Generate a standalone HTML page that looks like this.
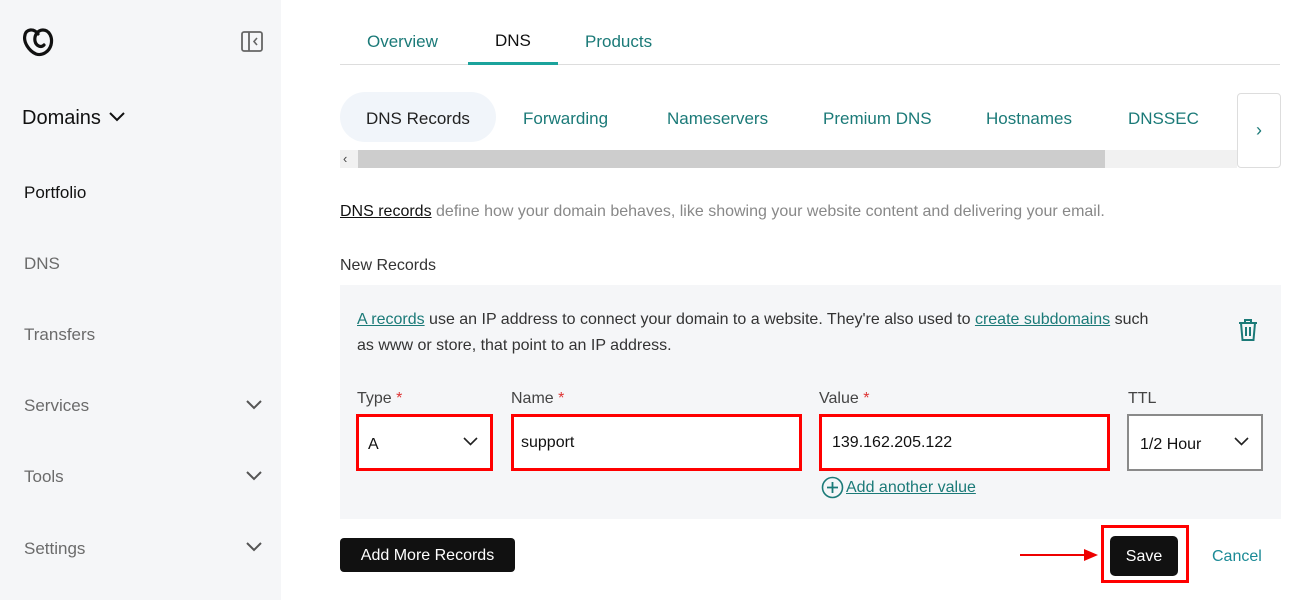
<!DOCTYPE html>
<html><head><meta charset="utf-8"><style>
*{box-sizing:border-box;margin:0;padding:0}
body{width:1300px;height:600px;overflow:hidden;font-family:"Liberation Sans",sans-serif;background:#fff;position:relative;color:#111}
.abs{position:absolute}
.side{left:0;top:0;width:281px;height:600px;background:#f5f6f8}
.si{position:absolute;left:24px;font-size:17px;color:#6b6b6b}
.chev{position:absolute;left:245px}
.teal{color:#1b7a78}
.red{border:3px solid #f00}
</style></head><body>
<div class="abs side">
<svg class="abs" style="left:22px;top:27px" width="32" height="30" viewBox="0 0 32 30"><path d="M16 7C12 1 4 2 3 8c-2 7 4 16 11 19 6 2 13-2 15-9 2-8-2-15-8-15-5 0-9 5-8 11 1 5 6 7 9 4" fill="none" stroke="#111" stroke-width="3.2" stroke-linecap="round"/></svg>
<svg class="abs" style="left:241px;top:31px" width="23" height="22" viewBox="0 0 23 22"><rect x="1" y="1" width="20" height="19" rx="2" fill="none" stroke="#666" stroke-width="1.8"/><line x1="8" y1="1" x2="8" y2="20" stroke="#666" stroke-width="1.8"/><path d="M16 7l-3 3.5 3 3.5" fill="none" stroke="#666" stroke-width="1.6"/></svg>
<div class="si" style="top:107px;left:22px;font-size:20px;color:#111">Domains</div>
<svg class="abs" style="left:108px;top:111px" width="18" height="12"><path d="M2 2l7 7 7-7" fill="none" stroke="#111" stroke-width="2"/></svg>
<div class="si" style="top:183px;color:#111">Portfolio</div>
<div class="si" style="top:254px">DNS</div>
<div class="si" style="top:325px">Transfers</div>
<div class="si" style="top:396px">Services</div>
<div class="si" style="top:467px">Tools</div>
<div class="si" style="top:539px">Settings</div>
<svg class="chev" style="top:399px" width="18" height="12"><path d="M2 2l7 7 7-7" fill="none" stroke="#555" stroke-width="2"/></svg>
<svg class="chev" style="top:470px" width="18" height="12"><path d="M2 2l7 7 7-7" fill="none" stroke="#555" stroke-width="2"/></svg>
<svg class="chev" style="top:541px" width="18" height="12"><path d="M2 2l7 7 7-7" fill="none" stroke="#555" stroke-width="2"/></svg>
</div>

<div class="abs teal" style="left:367px;top:32px;font-size:17px">Overview</div>
<div class="abs" style="left:495px;top:31px;font-size:17px">DNS</div>
<div class="abs teal" style="left:585px;top:32px;font-size:17px">Products</div>
<div class="abs" style="left:340px;top:64px;width:940px;height:1px;background:#ddd"></div>
<div class="abs" style="left:468px;top:62px;width:90px;height:3px;background:#1ba39c"></div>

<div class="abs" style="left:340px;top:92px;width:156px;height:50px;border-radius:25px;background:#f1f5fa"></div>
<div class="abs" style="left:366px;top:109px;font-size:17px;color:#222">DNS Records</div>
<div class="abs teal" style="left:523px;top:109px;font-size:17px">Forwarding</div>
<div class="abs teal" style="left:667px;top:109px;font-size:17px">Nameservers</div>
<div class="abs teal" style="left:823px;top:109px;font-size:17px">Premium DNS</div>
<div class="abs teal" style="left:986px;top:109px;font-size:17px">Hostnames</div>
<div class="abs teal" style="left:1128px;top:109px;font-size:17px">DNSSEC</div>
<div class="abs" style="left:340px;top:150px;width:897px;height:18px;background:#f1f1f1"></div>
<div class="abs" style="left:358px;top:150px;width:747px;height:18px;background:#cdcdcd"></div>
<div class="abs" style="left:343px;top:151px;font-size:13px;color:#444">‹</div>
<div class="abs" style="left:1237px;top:93px;width:44px;height:75px;border:1px solid #ddd;border-radius:4px;background:#fff;color:#1b7a78;font-size:18px;text-align:center;line-height:72px">›</div>

<div class="abs" style="left:340px;top:203px;font-size:16px;color:#888"><span style="color:#111;text-decoration:underline">DNS records</span> define how your domain behaves, like showing your website content and delivering your email.</div>
<div class="abs" style="left:340px;top:257px;font-size:16px;color:#333">New Records</div>

<div class="abs" style="left:340px;top:285px;width:941px;height:234px;background:#f5f6f8"></div>
<div class="abs" style="left:357px;top:307px;width:810px;font-size:16px;line-height:26px;color:#333"><span class="teal" style="text-decoration:underline">A records</span> use an IP address to connect your domain to a website. They're also used to <span class="teal" style="text-decoration:underline">create subdomains</span> such as www or store, that point to an IP address.</div>
<svg class="abs" style="left:1237px;top:318px" width="22" height="24" viewBox="0 0 22 24"><path d="M2 5h18M8 5V2h6v3M4 5l1.5 17h11L18 5M9 9v9M13 9v9" fill="none" stroke="#1b7a78" stroke-width="2"/></svg>

<div class="abs" style="left:357px;top:390px;font-size:16px;color:#444">Type <span style="color:#d33">*</span></div>
<div class="abs" style="left:511px;top:390px;font-size:16px;color:#444">Name <span style="color:#d33">*</span></div>
<div class="abs" style="left:819px;top:390px;font-size:16px;color:#444">Value <span style="color:#d33">*</span></div>
<div class="abs" style="left:1128px;top:390px;font-size:16px;color:#444">TTL</div>

<div class="abs red" style="left:356px;top:414px;width:137px;height:57px;background:#fff"></div>
<div class="abs" style="left:368px;top:436px;font-size:16px">A</div>
<svg class="abs" style="left:463px;top:437px" width="15" height="10"><path d="M1 1l6.5 6.5L14 1" fill="none" stroke="#222" stroke-width="1.6"/></svg>
<div class="abs red" style="left:511px;top:414px;width:291px;height:57px;background:#fff"></div>
<div class="abs" style="left:521px;top:434px;font-size:16px">support</div>
<div class="abs red" style="left:819px;top:414px;width:291px;height:57px;background:#fff"></div>
<div class="abs" style="left:832px;top:434px;font-size:16px">139.162.205.122</div>
<div class="abs" style="left:1127px;top:414px;width:136px;height:57px;border:2px solid #8a8a8a;background:#fff"></div>
<div class="abs" style="left:1140px;top:436px;font-size:16px">1/2 Hour</div>
<svg class="abs" style="left:1234px;top:437px" width="15" height="10"><path d="M1 1l6.5 6.5L14 1" fill="none" stroke="#222" stroke-width="1.6"/></svg>

<svg class="abs" style="left:821px;top:476px" width="23" height="23"><circle cx="11.5" cy="11.5" r="10" fill="none" stroke="#1b7a78" stroke-width="1.6"/><path d="M11.5 6v11M6 11.5h11" stroke="#1b7a78" stroke-width="1.8"/></svg>
<div class="abs teal" style="left:846px;top:479px;font-size:16px;text-decoration:underline">Add another value</div>

<div class="abs" style="left:340px;top:538px;width:175px;height:34px;background:#111;border-radius:4px;color:#fff;font-size:16px;text-align:center;line-height:36px">Add More Records</div>
<div class="abs" style="left:1020px;top:554px;width:70px;height:2px;background:#e00"></div>
<svg class="abs" style="left:1084px;top:549px" width="14" height="12"><path d="M0 0l14 6-14 6z" fill="#e00"/></svg>
<div class="abs red" style="left:1101px;top:525px;width:88px;height:58px"></div>
<div class="abs" style="left:1110px;top:536px;width:68px;height:40px;background:#111;border-radius:5px;color:#fff;font-size:16px;text-align:center;line-height:42px">Save</div>
<div class="abs teal" style="left:1212px;top:548px;font-size:16px;color:#1b8a96">Cancel</div>
</body></html>
